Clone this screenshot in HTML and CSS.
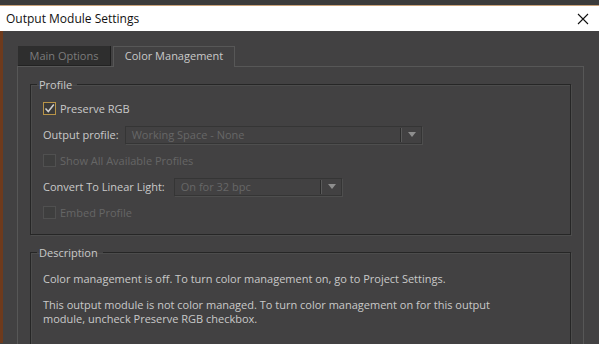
FILE: index.html
```html
<!DOCTYPE html>
<html>
<head>
<meta charset="utf-8">
<link rel="stylesheet" href="styles.css">
</head>
<body>
<div class="topstrip"></div>
<div class="titlebar">
  <span class="title">Output Module Settings</span>
  <svg class="close" width="12" height="12" viewBox="0 0 12 12"><path d="M1 1 L11 11 M11 1 L1 11" stroke="#111" stroke-width="1.1" fill="none"/></svg>
</div>
<div class="window">
  <div class="tabs">
    <div class="tab inactive">Main Options</div>
    <div class="tab active">Color Management</div>
  </div>
  <div class="panel">
    <fieldset class="group profile">
      <legend>Profile</legend>
      <div class="row check">
        <span class="box checked"><svg width="11" height="11" viewBox="0 0 11 11"><path d="M1.5 5.5 L4.3 8.5 L9.8 1.5" stroke="#cfcfcf" stroke-width="1.5" fill="none"/></svg></span>
        <span class="label">Preserve RGB</span>
      </div>
      <div class="row select-row">
        <span class="label">Output profile:</span>
        <div class="select wide"><span class="val">Working Space - None</span><span class="sep"></span><span class="arrow"></span></div>
      </div>
      <div class="row check disabled">
        <span class="box"></span>
        <span class="label">Show All Available Profiles</span>
      </div>
      <div class="row select-row">
        <span class="label">Convert To Linear Light:</span>
        <div class="select narrow"><span class="val">On for 32 bpc</span><span class="sep"></span><span class="arrow"></span></div>
      </div>
      <div class="row check disabled">
        <span class="box"></span>
        <span class="label">Embed Profile</span>
      </div>
    </fieldset>
    <fieldset class="group description">
      <legend>Description</legend>
      <p>Color management is off. To turn color management on, go to Project Settings.</p>
      <p>This output module is not color managed. To turn color management on for this output module, uncheck Preserve RGB checkbox.</p>
    </fieldset>
  </div>
</div>
</body>
</html>
```

FILE: styles.css
```css
* { box-sizing: border-box; }
html, body { margin: 0; padding: 0; }
body {
  width: 599px;
  height: 344px;
  overflow: hidden;
  background: #424142;
  font-family: "Open Sans", "Noto Sans", sans-serif;
  font-size: 11px;
  color: #c9c9c9;
}
.topstrip {
  height: 6px;
  background: #3b3b3b;
  border-bottom: 1px solid #c9a27a;
}
.titlebar {
  height: 25px;
  background: #ffffff;
  display: flex;
  align-items: center;
  justify-content: space-between;
  padding: 0 10px 0 6px;
  color: #111;
  font-size: 12px;
}
.close { display: block; margin-top: 1px; }
.window {
  height: 312px;
  border-left: 3px solid #6e3a1c;
  padding: 14px 15px 0 14px;
}
.tabs {
  display: flex;
  align-items: flex-end;
  height: 21px;
  padding-left: 1px;
}
.tab {
  display: flex;
  align-items: center;
  justify-content: center;
}
.tab.inactive {
  width: 93px;
  height: 20px;
  background: #2e2e2e;
  color: #7c7c7c;
  border-right: 1px solid #1e1e1e;
  border-bottom: 1px solid #222;
}
.tab.active {
  width: 122px;
  margin-left: 2px;
  height: 21px;
  padding-bottom: 3px;
  background: #424142;
  color: #c9c9c9;
  border: 1px solid #575757;
  border-bottom: none;
  position: relative;
  top: 1px;
}
.panel {
  border: 1px solid #575757;
  height: 290px;
  padding: 10px 12px 0 12px;
}
.group {
  margin: 0;
  border: 1px solid #262626;
  box-shadow: inset 1px 1px 0 #4c4c4c, 1px 1px 0 #4c4c4c;
  padding: 0 12px 0 12px;
}
legend {
  padding: 0 5px 0 2px;
  margin-left: -6px;
  color: #c9c9c9;
  font-size: 11px;
}
.profile { height: 158px; padding-top: 4px; }
.description { margin-top: 10px; height: 110px; padding-top: 12px; }
.row { display: flex; align-items: center; }
.check { height: 25px; }
.select-row { height: 27px; }
.box {
  width: 13px;
  height: 13px;
  border: 1px solid #555;
  background: #3e3e3e;
  margin-right: 4px;
  display: flex;
  align-items: center;
  justify-content: center;
}
.box.checked {
  border: 1px solid #b89448;
  background: #3a3a3a;
}
.disabled .label { color: #666; }
.disabled .box { border-color: #505050; }
.select {
  height: 18px;
  border: 1px solid #353535;
  box-shadow: 1px 1px 0 #4e4e4e;
  display: flex;
  align-items: center;
  color: #676767;
  padding-left: 6px;
}
.select.wide { width: 297px; margin-left: 6px; }
.select.narrow { width: 168px; margin-left: 9px; }
.val { flex: 1; }
.sep {
  width: 2px;
  height: 14px;
  border-left: 1px solid #2c2c2c;
  border-right: 1px solid #5a5a5a;
  margin-right: 6px;
}
.arrow {
  width: 0; height: 0;
  border-left: 4px solid transparent;
  border-right: 4px solid transparent;
  border-top: 5px solid #8e8e8e;
  margin-right: 5px;
}
.description p { margin: 0 0 12px 0; line-height: 14px; width: 462px; }
```
